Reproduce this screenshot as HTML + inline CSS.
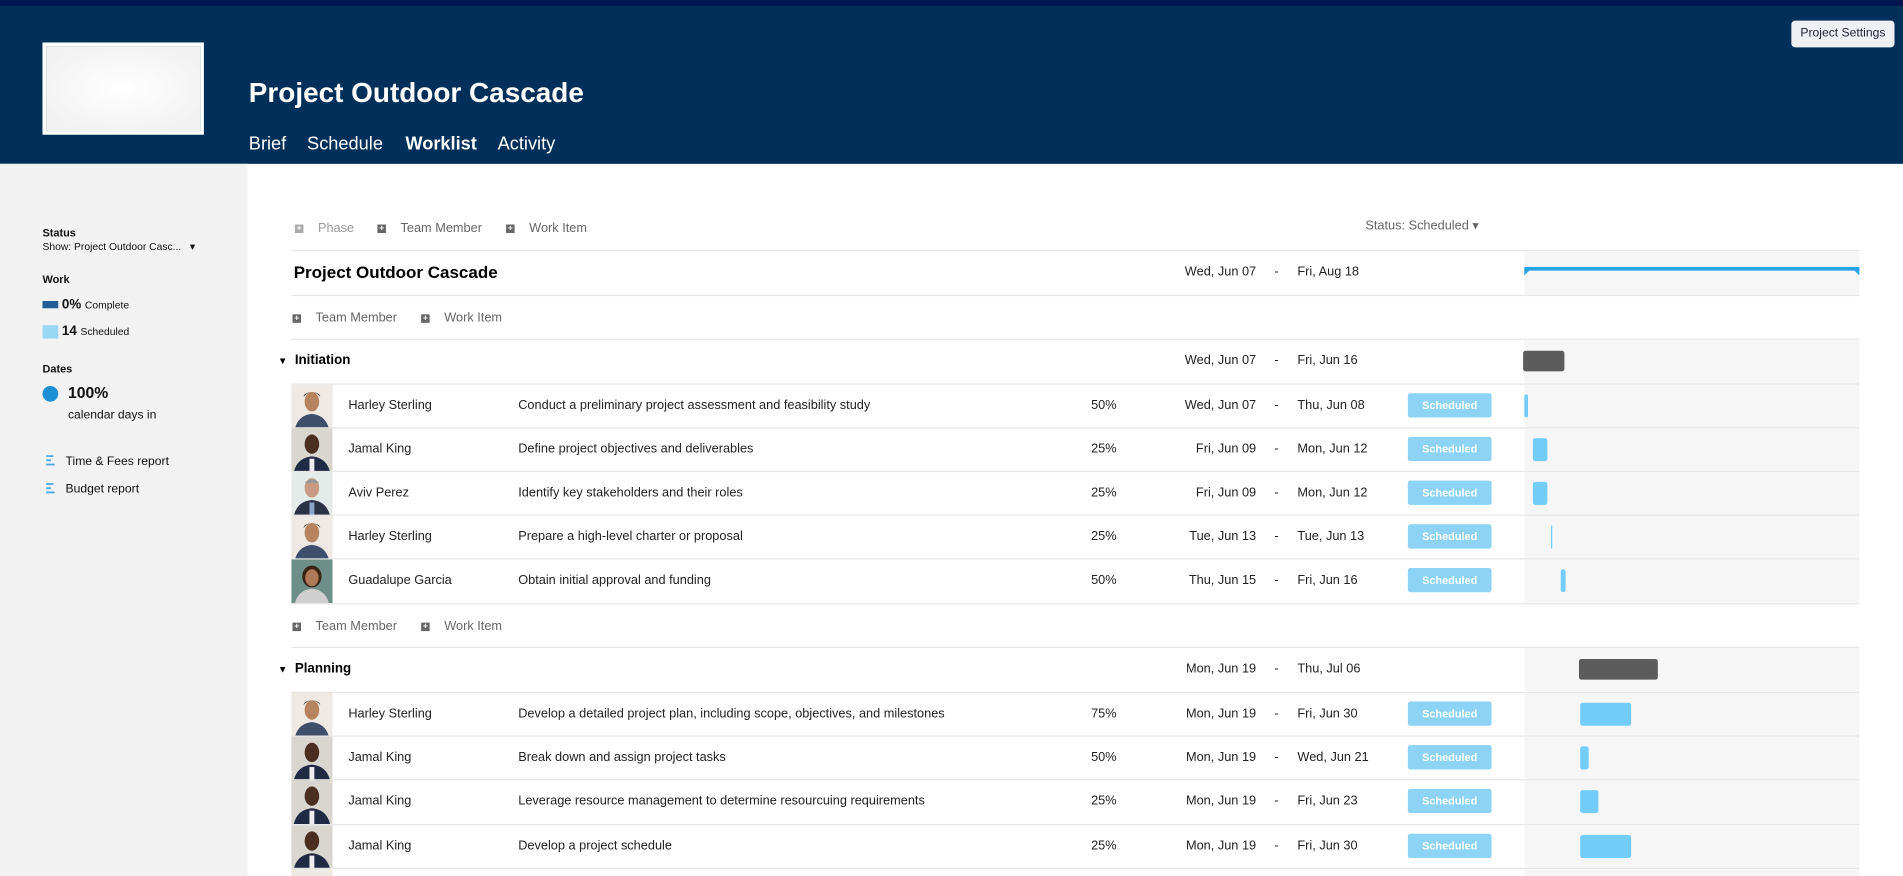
<!DOCTYPE html>
<html><head><meta charset="utf-8">
<style>
html,body{margin:0;padding:0;width:1903px;height:876px;overflow:hidden;background:#fff}
#w{position:absolute;left:0;top:0;width:1568px;height:722px;transform:scale(1.21365);transform-origin:0 0;font-family:"Liberation Sans",sans-serif;color:#111;overflow:hidden}
.a{position:absolute;white-space:nowrap}
#hd{position:absolute;left:0;top:0;width:1568px;height:135px;background:#00305a}
#stripe{position:absolute;left:0;top:0;width:1568px;height:5px;background:#001650}
#logo{left:35px;top:35px;width:133px;height:76px;background:radial-gradient(ellipse at center,#fff 0%,#f2f2f2 80%);border:3px solid #fff;box-sizing:border-box}
#side{left:0;top:135px;width:204px;height:587px;background:#f2f2f2}
.r{position:absolute;left:240px;width:1292px;height:36px;border-top:1px solid #e6e6e6;font-size:10.5px;color:#222}
.r .a{top:11px}
.g{position:absolute;left:1016px;top:0;width:276px;height:36px;background:#f6f6f6}
.av{position:absolute;left:0;top:0;width:34px;height:36px;overflow:hidden}
.nm{left:47px}.tk{left:187px}.pc{left:659px}.sd{right:497px;text-align:right}.ds{left:810px}.ed{left:829px}
.bd{position:absolute;left:920px;top:7px;width:69px;height:20px;background:#8dd3f5;color:#fff;font-weight:bold;font-size:9px;text-align:center;line-height:20px;border-radius:2px}
.bar{position:absolute;top:8px;height:19px;background:#73cdfa;border-radius:2px}
.pb{position:absolute;top:9px;height:17px;background:#5c5c5c;border-radius:2px}
.plus{display:inline-block;width:7px;height:7px;background:#666;color:#fff;font-size:7px;line-height:7px;text-align:center;font-weight:bold;vertical-align:1px;margin-right:12px}
.tb{font-size:10.5px;color:#666}
</style></head><body><div id="w">
<div id="hd"></div><div id="stripe"></div>
<div class="a" id="logo"></div>
<div class="a" style="left:205px;top:63px;font-size:23px;font-weight:bold;color:#fff">Project Outdoor Cascade</div>
<div class="a" style="left:205px;top:110px;font-size:15px;color:#fff">Brief</div>
<div class="a" style="left:253px;top:110px;font-size:15px;color:#fff">Schedule</div>
<div class="a" style="left:334px;top:110px;font-size:15px;color:#fff;font-weight:bold">Worklist</div>
<div class="a" style="left:410px;top:110px;font-size:15px;color:#fff">Activity</div>
<div class="a" style="left:1476px;top:17px;width:85px;height:22px;background:#eef0f3;border-radius:3px;font-size:10px;color:#223;text-align:center;line-height:22px">Project Settings</div>

<div class="a" id="side"></div>
<div class="a" style="left:35px;top:187px;font-size:9px;font-weight:bold">Status</div>
<div class="a" style="left:35px;top:198px;font-size:8.5px">Show: Project Outdoor Casc... &nbsp;&nbsp;▾</div>
<div class="a" style="left:35px;top:225px;font-size:9px;font-weight:bold">Work</div>
<div class="a" style="left:35px;top:248px;width:13px;height:6px;background:#1f5f95"></div>
<div class="a" style="left:51px;top:245px;font-size:11px;font-weight:bold">0% <span style="font-size:8.5px;font-weight:normal">Complete</span></div>
<div class="a" style="left:35px;top:268px;width:13px;height:11px;background:#9ad7f5"></div>
<div class="a" style="left:51px;top:267px;font-size:11px;font-weight:bold">14 <span style="font-size:8.5px;font-weight:normal">Scheduled</span></div>
<div class="a" style="left:35px;top:299px;font-size:9px;font-weight:bold">Dates</div>
<div class="a" style="left:35px;top:318px;width:13px;height:13px;border-radius:50%;background:#1e90d6"></div>
<div class="a" style="left:56px;top:316px;font-size:13px;font-weight:bold">100%</div>
<div class="a" style="left:56px;top:337px;font-size:10px">calendar days in</div>
<div class="a" style="left:38px;top:375px;font-size:10px">
<svg width="8" height="9" style="vertical-align:-1px;margin-right:8px"><rect x="0" y="0" width="6" height="1.5" fill="#4aa8e0"/><rect x="0" y="3.5" width="4" height="1.5" fill="#4aa8e0"/><rect x="0" y="7" width="7" height="1.5" fill="#4aa8e0"/></svg>Time &amp; Fees report</div>
<div class="a" style="left:38px;top:398px;font-size:10px">
<svg width="8" height="9" style="vertical-align:-1px;margin-right:8px"><rect x="0" y="0" width="6" height="1.5" fill="#4aa8e0"/><rect x="0" y="3.5" width="4" height="1.5" fill="#4aa8e0"/><rect x="0" y="7" width="7" height="1.5" fill="#4aa8e0"/></svg>Budget report</div>

<div class="a tb" style="left:243px;top:182px"><span class="plus" style="background:#aaa">+</span><span style="color:#999">Phase</span></div>
<div class="a tb" style="left:311px;top:182px"><span class="plus">+</span>Team Member</div>
<div class="a tb" style="left:417px;top:182px"><span class="plus">+</span>Work Item</div>
<div class="a tb" style="left:1125px;top:180px">Status: Scheduled ▾</div>

<div class="r" style="top:206px"><div class="g"></div>
<div class="a" style="left:2px;top:9px;font-size:14px;font-weight:bold;color:#000">Project Outdoor Cascade</div>
<div class="a sd">Wed, Jun 07</div><div class="a ds">-</div><div class="a ed">Fri, Aug 18</div>
<div style="position:absolute;left:1016px;top:13px;width:276px;height:3px;background:#29a3e8"></div>
<div style="position:absolute;left:1016px;top:15px;border-top:5px solid #29a3e8;border-right:5px solid transparent"></div>
<div style="position:absolute;left:1287px;top:15px;border-top:5px solid #29a3e8;border-left:5px solid transparent"></div>
</div>
<div class="r" style="top:243px">
<div class="a tb" style="left:1px;top:12px"><span class="plus">+</span>Team Member</div>
<div class="a tb" style="left:107px;top:12px"><span class="plus">+</span>Work Item</div></div>

<div class="r" style="top:279px"><div class="g"></div>
<div class="a" style="left:-11px;font-size:11px;font-weight:bold;color:#000"><span style="font-size:8px;margin-right:6px">▼</span>Initiation</div>
<div class="a sd">Wed, Jun 07</div><div class="a ds">-</div><div class="a ed">Fri, Jun 16</div>
<div class="pb" style="left:1015px;width:34px"></div></div>

<div class="r" style="top:316px"><div class="g"></div>
<svg class="av" viewBox="0 0 34 36"><rect width="34" height="36" fill="#eee9e2"/><ellipse cx="17" cy="14" rx="6" ry="8" fill="#b8845f"/><path d="M10 10 Q17 2 24 10 L23 8 Q17 4 11 8Z" fill="#222"/><path d="M3 36 Q6 25 17 24 Q28 25 31 36Z" fill="#3d4f6a"/></svg>
<div class="a nm">Harley Sterling</div><div class="a tk">Conduct a preliminary project assessment and feasibility study</div>
<div class="a pc">50%</div><div class="a sd">Wed, Jun 07</div><div class="a ds">-</div><div class="a ed">Thu, Jun 08</div>
<div class="bd">Scheduled</div><div class="bar" style="left:1016px;width:3px"></div></div>

<div class="r" style="top:352px"><div class="g"></div>
<svg class="av" viewBox="0 0 34 36"><rect width="34" height="36" fill="#d9d6d0"/><ellipse cx="17" cy="13" rx="6" ry="8" fill="#4a2e20"/><path d="M2 36 Q5 24 17 23 Q29 24 32 36Z" fill="#1f2b44"/><rect x="15" y="25" width="4" height="11" fill="#eee"/></svg>
<div class="a nm">Jamal King</div><div class="a tk">Define project objectives and deliverables</div>
<div class="a pc">25%</div><div class="a sd">Fri, Jun 09</div><div class="a ds">-</div><div class="a ed">Mon, Jun 12</div>
<div class="bd">Scheduled</div><div class="bar" style="left:1023px;width:12px"></div></div>

<div class="r" style="top:388px"><div class="g"></div>
<svg class="av" viewBox="0 0 34 36"><rect width="34" height="36" fill="#e4ebe8"/><ellipse cx="17" cy="13" rx="6" ry="8" fill="#c89c82"/><path d="M11 9 Q17 3 23 9Z" fill="#999"/><path d="M2 36 Q5 24 17 23 Q29 24 32 36Z" fill="#2a3346"/><rect x="15" y="25" width="4" height="11" fill="#8aa6c9"/></svg>
<div class="a nm">Aviv Perez</div><div class="a tk">Identify key stakeholders and their roles</div>
<div class="a pc">25%</div><div class="a sd">Fri, Jun 09</div><div class="a ds">-</div><div class="a ed">Mon, Jun 12</div>
<div class="bd">Scheduled</div><div class="bar" style="left:1023px;width:12px"></div></div>

<div class="r" style="top:424px"><div class="g"></div>
<svg class="av" viewBox="0 0 34 36"><rect width="34" height="36" fill="#eee9e2"/><ellipse cx="17" cy="14" rx="6" ry="8" fill="#b8845f"/><path d="M10 10 Q17 2 24 10 L23 8 Q17 4 11 8Z" fill="#222"/><path d="M3 36 Q6 25 17 24 Q28 25 31 36Z" fill="#3d4f6a"/></svg>
<div class="a nm">Harley Sterling</div><div class="a tk">Prepare a high-level charter or proposal</div>
<div class="a pc">25%</div><div class="a sd">Tue, Jun 13</div><div class="a ds">-</div><div class="a ed">Tue, Jun 13</div>
<div class="bd">Scheduled</div><div class="bar" style="left:1038px;width:1px"></div></div>

<div class="r" style="top:460px"><div class="g"></div>
<svg class="av" viewBox="0 0 34 36"><rect width="34" height="36" fill="#6e8f88"/><ellipse cx="17" cy="14" rx="8" ry="9" fill="#3a2418"/><ellipse cx="17" cy="15" rx="5.5" ry="7" fill="#b07a58"/><path d="M3 36 Q6 25 17 24 Q28 25 31 36Z" fill="#cfcfcf"/></svg>
<div class="a nm">Guadalupe Garcia</div><div class="a tk">Obtain initial approval and funding</div>
<div class="a pc">50%</div><div class="a sd">Thu, Jun 15</div><div class="a ds">-</div><div class="a ed">Fri, Jun 16</div>
<div class="bd">Scheduled</div><div class="bar" style="left:1046px;width:4px"></div></div>

<div class="r" style="top:497px">
<div class="a tb" style="left:1px;top:12px"><span class="plus">+</span>Team Member</div>
<div class="a tb" style="left:107px;top:12px"><span class="plus">+</span>Work Item</div></div>

<div class="r" style="top:533px"><div class="g"></div>
<div class="a" style="left:-11px;font-size:11px;font-weight:bold;color:#000"><span style="font-size:8px;margin-right:6px">▼</span>Planning</div>
<div class="a sd">Mon, Jun 19</div><div class="a ds">-</div><div class="a ed">Thu, Jul 06</div>
<div class="pb" style="left:1061px;width:65px"></div></div>

<div class="r" style="top:570px"><div class="g"></div>
<svg class="av" viewBox="0 0 34 36"><rect width="34" height="36" fill="#eee9e2"/><ellipse cx="17" cy="14" rx="6" ry="8" fill="#b8845f"/><path d="M10 10 Q17 2 24 10 L23 8 Q17 4 11 8Z" fill="#222"/><path d="M3 36 Q6 25 17 24 Q28 25 31 36Z" fill="#3d4f6a"/></svg>
<div class="a nm">Harley Sterling</div><div class="a tk">Develop a detailed project plan, including scope, objectives, and milestones</div>
<div class="a pc">75%</div><div class="a sd">Mon, Jun 19</div><div class="a ds">-</div><div class="a ed">Fri, Jun 30</div>
<div class="bd">Scheduled</div><div class="bar" style="left:1062px;width:42px"></div></div>

<div class="r" style="top:606px"><div class="g"></div>
<svg class="av" viewBox="0 0 34 36"><rect width="34" height="36" fill="#d9d6d0"/><ellipse cx="17" cy="13" rx="6" ry="8" fill="#4a2e20"/><path d="M2 36 Q5 24 17 23 Q29 24 32 36Z" fill="#1f2b44"/><rect x="15" y="25" width="4" height="11" fill="#eee"/></svg>
<div class="a nm">Jamal King</div><div class="a tk">Break down and assign project tasks</div>
<div class="a pc">50%</div><div class="a sd">Mon, Jun 19</div><div class="a ds">-</div><div class="a ed">Wed, Jun 21</div>
<div class="bd">Scheduled</div><div class="bar" style="left:1062px;width:7px"></div></div>

<div class="r" style="top:642px"><div class="g"></div>
<svg class="av" viewBox="0 0 34 36"><rect width="34" height="36" fill="#d9d6d0"/><ellipse cx="17" cy="13" rx="6" ry="8" fill="#4a2e20"/><path d="M2 36 Q5 24 17 23 Q29 24 32 36Z" fill="#1f2b44"/><rect x="15" y="25" width="4" height="11" fill="#eee"/></svg>
<div class="a nm">Jamal King</div><div class="a tk">Leverage resource management to determine resourcuing requirements</div>
<div class="a pc">25%</div><div class="a sd">Mon, Jun 19</div><div class="a ds">-</div><div class="a ed">Fri, Jun 23</div>
<div class="bd">Scheduled</div><div class="bar" style="left:1062px;width:15px"></div></div>

<div class="r" style="top:679px"><div class="g"></div>
<svg class="av" viewBox="0 0 34 36"><rect width="34" height="36" fill="#d9d6d0"/><ellipse cx="17" cy="13" rx="6" ry="8" fill="#4a2e20"/><path d="M2 36 Q5 24 17 23 Q29 24 32 36Z" fill="#1f2b44"/><rect x="15" y="25" width="4" height="11" fill="#eee"/></svg>
<div class="a nm">Jamal King</div><div class="a tk">Develop a project schedule</div>
<div class="a pc">25%</div><div class="a sd">Mon, Jun 19</div><div class="a ds">-</div><div class="a ed">Fri, Jun 30</div>
<div class="bd">Scheduled</div><div class="bar" style="left:1062px;width:42px"></div></div>

<div class="r" style="top:715px"><div class="g"></div>
<svg class="av" viewBox="0 0 34 36"><rect width="34" height="36" fill="#eee9e2"/><ellipse cx="17" cy="14" rx="6" ry="8" fill="#222"/></svg></div>
</div></body></html>
